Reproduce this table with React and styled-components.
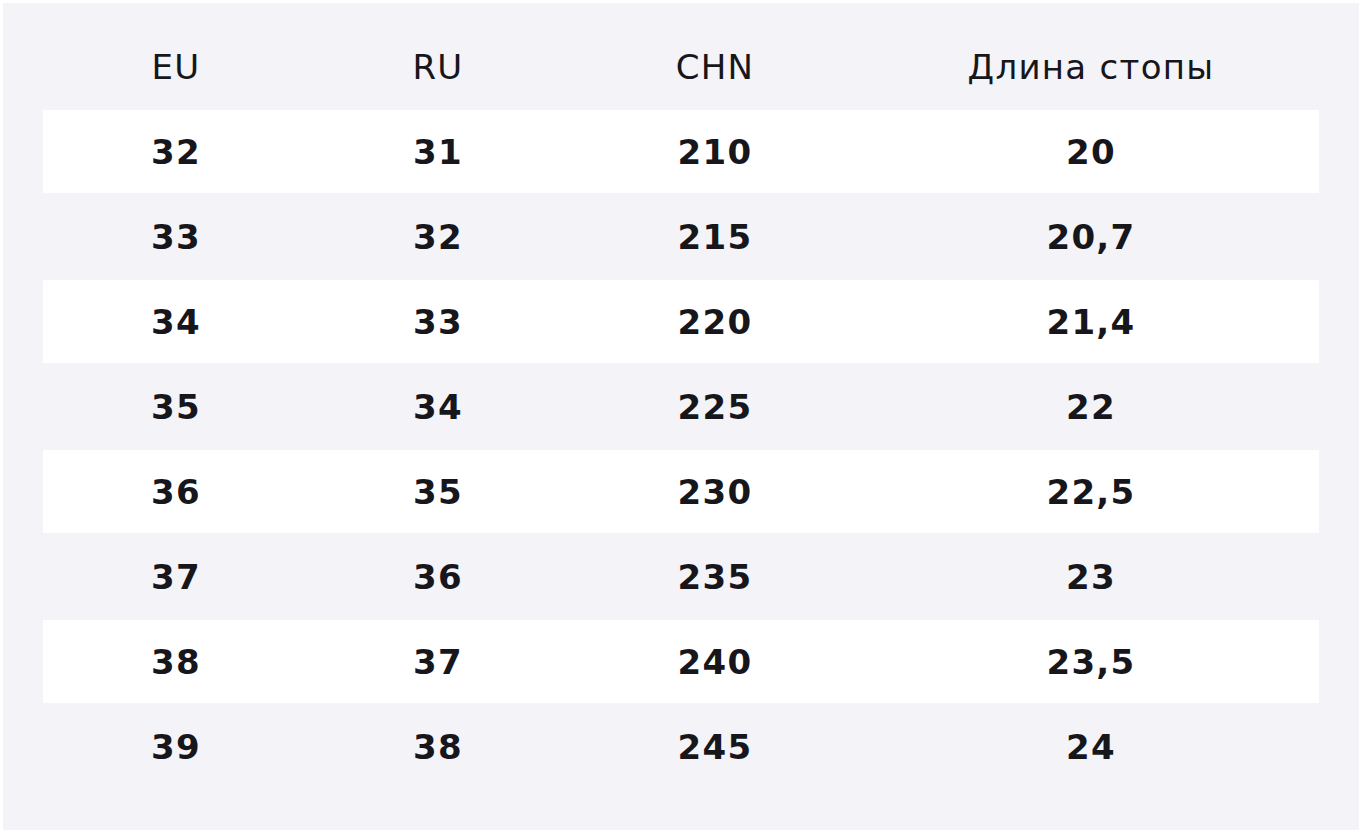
import React from "react";
import styled, { createGlobalStyle } from "styled-components";

const GlobalStyle = createGlobalStyle`
  body {
    margin: 3px 3px 3px 3px;
    background: #ffffff;
    font-family: "DejaVu Sans", "Liberation Sans", sans-serif;
  }
`;

const Panel = styled.div`
  background-color: #f3f3f8;
  padding: 21px 40px 41px 40px;
  min-height: 827px;
  box-sizing: border-box;
`;

const Table = styled.div`
  display: grid;
  grid-template-columns: 266px 258px 296px 1fr;
`;

const Row = styled.div`
  display: contents;
`;

const Cell = styled.div`
  height: 85px;
  box-sizing: border-box;
  display: flex;
  align-items: center;
  justify-content: center;
  font-size: 34px;
  letter-spacing: 1.3px;
  color: #16161b;
  font-weight: ${(props) => (props.head ? 400 : 700)};
  background-color: ${(props) => (props.light ? "#ffffff" : "transparent")};
  border-top: 1px solid #f3f3f8;
  border-bottom: 1px solid #f3f3f8;
  padding-top: 1px;
`;

const HeadCell = styled(Cell)`
  align-items: flex-start;
  padding-top: 23px;
  border: 0;
`;

const head = ["EU", "RU", "CHN", "Длина стопы"];

const sizes = [
  ["32", "31", "210", "20"],
  ["33", "32", "215", "20,7"],
  ["34", "33", "220", "21,4"],
  ["35", "34", "225", "22"],
  ["36", "35", "230", "22,5"],
  ["37", "36", "235", "23"],
  ["38", "37", "240", "23,5"],
  ["39", "38", "245", "24"],
];

const App = () => {
  return (
    <>
      <GlobalStyle />
      <Panel>
        <Table>
          <Row>
            {head.map((h) => (
              <HeadCell key={h} head>
                {h}
              </HeadCell>
            ))}
          </Row>
          {sizes.map((row, i) => (
            <Row key={row[0]}>
              {row.map((v, j) => (
                <Cell key={j} light={i % 2 === 0}>
                  {v}
                </Cell>
              ))}
            </Row>
          ))}
        </Table>
      </Panel>
    </>
  );
};

export default App;
